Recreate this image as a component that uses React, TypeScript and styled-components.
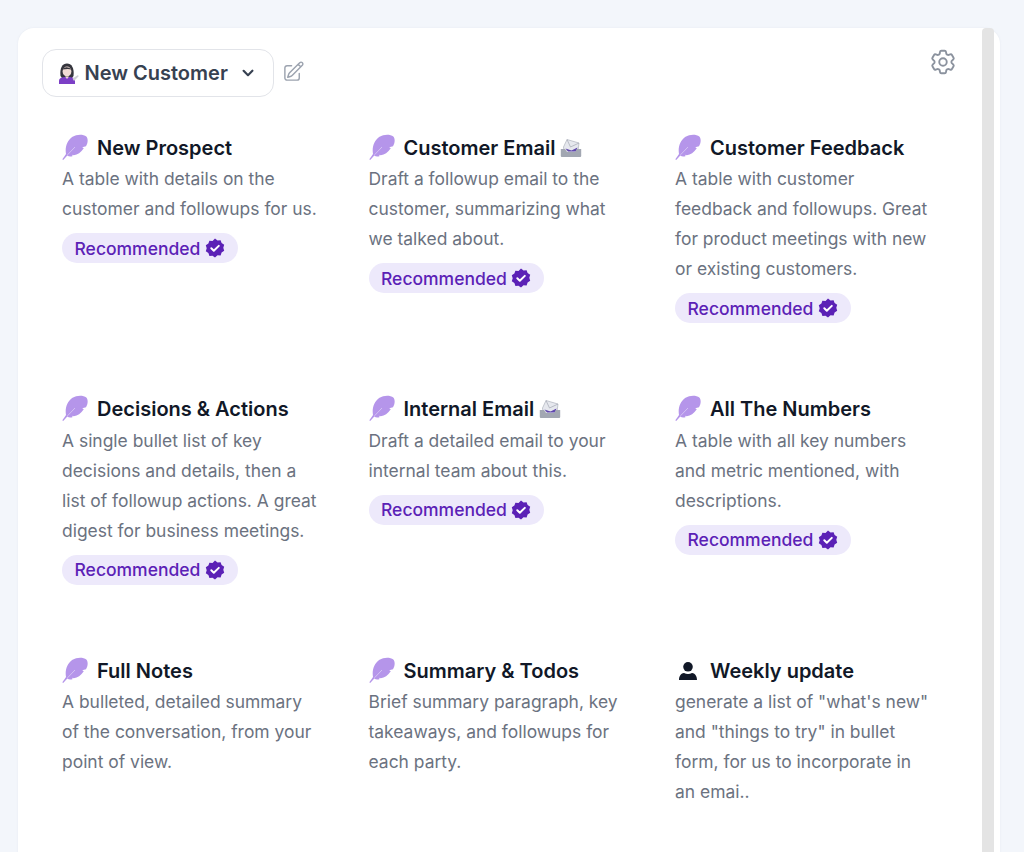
import React from 'react'
import styled, { createGlobalStyle } from 'styled-components'
import { HiChevronDown } from 'react-icons/hi'
import { HiOutlinePencilSquare, HiOutlineCog6Tooth } from 'react-icons/hi2'

interface Template {
  title: string
  text: string[]
  recommended?: boolean
  mail?: boolean
  person?: boolean
}

const templates: Template[] = [
  {
    title: 'New Prospect',
    text: ['A table with details on the', 'customer and followups for us.'],
    recommended: true,
  },
  {
    title: 'Customer Email',
    mail: true,
    text: [
      'Draft a followup email to the',
      'customer, summarizing what',
      'we talked about.',
    ],
    recommended: true,
  },
  {
    title: 'Customer Feedback',
    text: [
      'A table with customer',
      'feedback and followups. Great',
      'for product meetings with new',
      'or existing customers.',
    ],
    recommended: true,
  },
  {
    title: 'Decisions & Actions',
    text: [
      'A single bullet list of key',
      'decisions and details, then a',
      'list of followup actions. A great',
      'digest for business meetings.',
    ],
    recommended: true,
  },
  {
    title: 'Internal Email',
    mail: true,
    text: ['Draft a detailed email to your', 'internal team about this.'],
    recommended: true,
  },
  {
    title: 'All The Numbers',
    text: [
      'A table with all key numbers',
      'and metric mentioned, with',
      'descriptions.',
    ],
    recommended: true,
  },
  {
    title: 'Full Notes',
    text: [
      'A bulleted, detailed summary',
      'of the conversation, from your',
      'point of view.',
    ],
  },
  {
    title: 'Summary & Todos',
    text: [
      'Brief summary paragraph, key',
      'takeaways, and followups for',
      'each party.',
    ],
  },
  {
    title: 'Weekly update',
    person: true,
    text: [
      'generate a list of "what\'s new"',
      'and "things to try" in bullet',
      'form, for us to incorporate in',
      'an emai..',
    ],
  },
]

const WomanEmoji = () => (
  <svg width="21" height="21" viewBox="0 0 21 21">
    <path d="M2.500 13C1.500 5 4.500 .5 9 .5s7.500 4.500 6.500 12.500l-1.500 2H4z" fill="#35353d" />
    <ellipse cx="9" cy="8.500" rx="4.400" ry="5" fill="#f2dcd5" />
    <path d="M4.500 6.500C6 4 10 3 13.500 6.500 11 5.500 7 6 4.500 6.500z" fill="#35353d" />
    <path d="M1 21v-3.500C1 15.500 3 14.500 6 14h6c2.500.5 4 1 5 2v5z" fill="#7c3fc6" />
    <path d="M7 13.500h4L9 16z" fill="#f2dcd5" />
    <path d="M14.500 15.500l5.500-3.500.7 1.200-4.700 4.800z" fill="#cfcfd4" />
  </svg>
)

const MailEmoji = () => (
  <svg width="22" height="20" viewBox="0 0 22 20">
    <path d="M3.500 9L7 1.500 19 5l-1 8H4z" fill="#e6e8ee" stroke="#a3a8b3" strokeWidth="0.6" />
    <path d="M7 1.500L10.500 9 19 5" fill="none" stroke="#a3a8b3" strokeWidth="0.7" />
    <path d="M5.500 10.500l6 2 6-3-1.500 4H8z" fill="#5f46ad" />
    <path d="M.8 11h4.200l2 3h8l2-3h4.200v7a1 1 0 0 1-1 1H1.800a1 1 0 0 1-1-1z" fill="#a2a7b2" />
  </svg>
)

const FeatherIcon = () => (
  <FeatherSvg viewBox="0 0 26 26">
    <path d="M.3 25.300C1.800 23.300 3 21.500 4 20 2.800 13.500 5 6.500 10.500 2.800 14.800 0 21.300 0 24.300 2.500c2 2.200 1.700 6.500-.3 9.800l-3.800.9 1.600 1.100C19 18.500 15.500 21 11.800 21.200l-2-.5 1 1.200c-2.300.9-4.200.6-5.500-.4L1.200 26z" />
    <path d="M5.500 20.800L13 13" fill="none" stroke="#fff" strokeWidth="0.6" opacity="0.7" />
  </FeatherSvg>
)

const PersonIcon = () => (
  <PersonSvg viewBox="0 0 18 18">
    <circle cx="9" cy="4.800" r="4.800" />
    <path d="M0 18c0-3.500 1.500-6.500 5-7 2.500 1.300 5.500 1.300 8 0 3.500.5 5 3.500 5 7z" />
  </PersonSvg>
)

const VerifiedIcon = () => (
  <VerifiedSvg viewBox="0 0 20 20">
    <path d="M10 .6l2.500 1.800 3.100-.2 1 2.900 2.600 1.700-.9 3 .9 3-2.600 1.700-1 2.900-3.100-.2L10 19.500l-2.500-1.800-3.100.2-1-2.900-2.600-1.700.9-3-.9-3 2.600-1.700 1-2.900 3.100.2z" />
    <path d="M6.300 10.300l2.500 2.400 5-4.800" fill="none" stroke="#fff" strokeWidth="2" strokeLinecap="round" strokeLinejoin="round" />
  </VerifiedSvg>
)

const App = () => (
  <>
    <GlobalStyle />
    <Page>
      <Card>
        <Content>
          <Toolbar>
            <Selector>
              <WomanEmoji />
              <SelectorLabel>New Customer</SelectorLabel>
              <HiChevronDown size={22} color="#374151" />
            </Selector>
            <EditIcon />
            <SettingsIcon />
          </Toolbar>
          <Grid>
            {templates.map((t) => (
              <Item key={t.title}>
                <TitleRow>
                  <IconSlot>
                    {t.person ? <PersonIcon /> : <FeatherIcon />}
                  </IconSlot>
                  <Title>{t.title}</Title>
                  {t.mail && <MailEmoji />}
                </TitleRow>
                <Description>
                  {t.text.map((line) => (
                    <Line key={line}>{line}</Line>
                  ))}
                </Description>
                {t.recommended && (
                  <Badge>
                    Recommended
                    <VerifiedIcon />
                  </Badge>
                )}
              </Item>
            ))}
          </Grid>
        </Content>
        <ScrollTrack />
      </Card>
    </Page>
  </>
)

export default App

const GlobalStyle = createGlobalStyle`
  html, body {
    margin: 0;
    height: 100%;
    overflow: hidden;
    background: #f3f6fb;
    font-family: Inter, "Liberation Sans", sans-serif;
  }
`

const Page = styled.div`
  height: 852px;
  overflow: hidden;
  padding: 28px 24px 0 18px;
  box-sizing: border-box;
`

const Card = styled.div`
  display: flex;
  height: 900px;
  background: #fff;
  border-radius: 16px 16px 0 0;
  box-shadow: 0 0 2px rgba(200, 205, 215, 0.3);
  padding-right: 6px;
`

const Content = styled.div`
  flex: 1;
  min-width: 0;
  padding: 21px 0 0 24px;
`

const Toolbar = styled.div`
  display: flex;
  align-items: flex-start;
  padding-right: 24px;
`

const Selector = styled.div`
  display: flex;
  align-items: center;
  box-sizing: border-box;
  width: 232px;
  height: 48px;
  padding: 0 14px 0 15px;
  border: 1px solid #e2e4e9;
  border-radius: 14px;
  background: #fff;
`

const SelectorLabel = styled.span`
  flex: 1;
  margin-left: 5.5px;
  font-size: 20px;
  font-weight: 600;
  color: #374151;
`

const EditIcon = styled(HiOutlinePencilSquare)`
  width: 23px;
  height: 23px;
  margin: 11px 0 0 8px;
  color: #9ca3af;
`

const SettingsIcon = styled(HiOutlineCog6Tooth)`
  width: 30px;
  height: 30px;
  margin: -2px 0 0 auto;
  color: #8b929e;
`

const Grid = styled.div`
  display: grid;
  grid-template-columns: repeat(3, 306.5px);
  row-gap: 69.5px;
  padding: 34px 0 0 20px;
`

const Item = styled.div`
  display: flex;
  flex-direction: column;
  align-items: flex-start;
`

const TitleRow = styled.div`
  display: flex;
  align-items: center;
  height: 33px;
`

const IconSlot = styled.span`
  display: flex;
  justify-content: center;
  width: 26px;
  margin-right: 9px;
`

const FeatherSvg = styled.svg`
  width: 26px;
  height: 26px;
  margin-top: -2px;
  fill: #b595ea;
`

const PersonSvg = styled.svg`
  width: 18px;
  height: 18px;
  fill: #111827;
`

const VerifiedSvg = styled.svg`
  width: 20px;
  height: 20px;
  fill: #5b21b6;
`

const Title = styled.span`
  margin-right: 5px;
  font-size: 20px;
  font-weight: 600;
  color: #111827;
`

const Description = styled.div`
  font-size: 17.45px;
  line-height: 30px;
  color: #6b7280;
`

const Line = styled.div`
  white-space: nowrap;
`

const Badge = styled.div`
  display: flex;
  align-items: center;
  gap: 4.5px;
  height: 30px;
  margin-top: 9px;
  padding: 0 13px 0 12.5px;
  border-radius: 15px;
  background: #ede9fb;
  font-size: 17.5px;
  font-weight: 500;
  color: #5b21b6;
`

const ScrollTrack = styled.div`
  flex: none;
  width: 12px;
  background: #e4e4e4;
  border-radius: 4px 4px 0 0;
`
